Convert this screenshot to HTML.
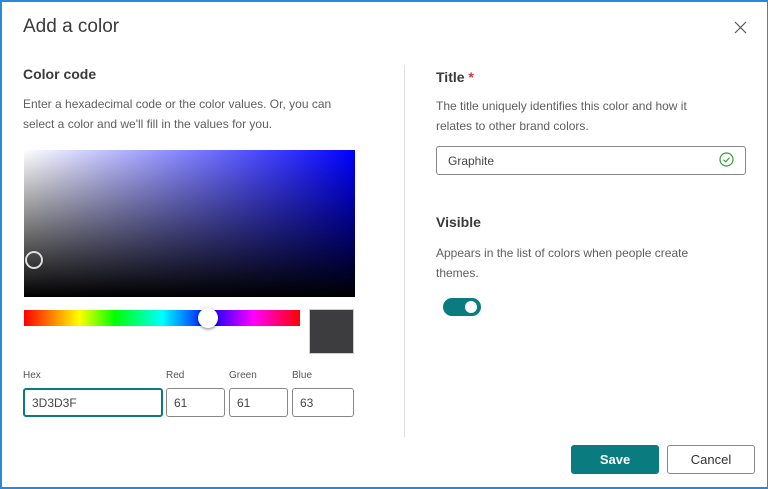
<!DOCTYPE html><html><head><style>
*{box-sizing:border-box;margin:0;padding:0}
body{width:768px;height:489px;background:#fff;font-family:"Liberation Sans",sans-serif;color:#323130;position:relative;overflow:hidden}
.frame{position:absolute;left:0;top:0;width:768px;height:489px;border:2px solid #2b88d8;border-right-width:1px;border-bottom-width:2px}
.a{position:absolute;white-space:nowrap}
.desc{font-size:12px;color:#605e5c;line-height:20px}
.h{font-size:14px;font-weight:bold;color:#3b3a39}
.inp{position:absolute;border:1px solid #8a8886;border-radius:3px;font-size:12px;padding-left:7px;display:flex;align-items:center;color:#444}
.lab{font-size:10px;color:#555}
</style></head><body>
<div class="frame"></div>
<div class="a" style="left:23px;top:16px;font-size:19px;color:#3b3a39">Add a color</div>
<svg class="a" style="left:734px;top:21px" width="13" height="13"><path d="M1 1L12 12M12 1L1 12" stroke="#555" stroke-width="1.2"/></svg>
<div class="a h" style="left:23px;top:66px">Color code</div>
<div class="a desc" style="left:23px;top:94px">Enter a hexadecimal code or the color values. Or, you can<br>select a color and we'll fill in the values for you.</div>
<div class="a" style="left:24px;top:150px;width:331px;height:147px;background:linear-gradient(to bottom,rgba(0,0,0,0),#000),linear-gradient(to right,#fff,#00f)"></div>
<div class="a" style="left:25px;top:251px;width:18px;height:18px;border:2px solid #ddd;border-radius:50%;box-shadow:0 0 1px #000"></div>
<div class="a" style="left:24px;top:310px;width:276px;height:16px;background:linear-gradient(to right,#f00,#ff0 20%,#0f0 33%,#0ff 50%,#00f 67%,#f0f 83%,#f00)"></div>
<div class="a" style="left:198px;top:308px;width:20px;height:20px;border-radius:50%;background:#fff;box-shadow:0 1px 3px rgba(0,0,0,.5)"></div>
<div class="a" style="left:309px;top:309px;width:45px;height:45px;background:#3d3d3f;border:1px solid #ccc"></div>
<div class="a lab" style="left:23px;top:370px">Hex</div>
<div class="a lab" style="left:166px;top:370px">Red</div>
<div class="a lab" style="left:229px;top:370px">Green</div>
<div class="a lab" style="left:292px;top:370px">Blue</div>
<div class="inp" style="left:23px;top:388px;width:140px;height:29px;border:2px solid #0a7c80">3D3D3F</div>
<div class="inp" style="left:166px;top:388px;width:59px;height:29px">61</div>
<div class="inp" style="left:229px;top:388px;width:59px;height:29px">61</div>
<div class="inp" style="left:292px;top:388px;width:62px;height:29px">63</div>
<div class="a" style="left:404px;top:65px;width:1px;height:372px;background:#e1dfdd"></div>
<div class="a h" style="left:436px;top:69px">Title <span style="color:#d13438">*</span></div>
<div class="a desc" style="left:436px;top:96px">The title uniquely identifies this color and how it<br>relates to other brand colors.</div>
<div class="inp" style="left:436px;top:146px;width:310px;height:29px;padding-left:11px">Graphite</div>
<svg class="a" style="left:719px;top:152px" width="15" height="15"><circle cx="7.5" cy="7.5" r="6.5" fill="none" stroke="#3a9d3a" stroke-width="1.2"/><path d="M4.5 7.8L6.7 9.8L10.5 5.6" fill="none" stroke="#3a9d3a" stroke-width="1.2"/></svg>
<div class="a h" style="left:436px;top:214px">Visible</div>
<div class="a desc" style="left:436px;top:243px">Appears in the list of colors when people create<br>themes.</div>
<div class="a" style="left:443px;top:298px;width:38px;height:18px;border-radius:9px;background:#0a7c80"></div>
<div class="a" style="left:465px;top:301px;width:12px;height:12px;border-radius:50%;background:#fff"></div>
<div class="a" style="left:571px;top:445px;width:88px;height:29px;background:#0a7c80;border-radius:3px;color:#fff;font-size:13px;font-weight:bold;display:flex;align-items:center;justify-content:center">Save</div>
<div class="a" style="left:667px;top:445px;width:88px;height:29px;border:1px solid #8a8886;border-radius:3px;font-size:13px;display:flex;align-items:center;justify-content:center">Cancel</div>
</body></html>
